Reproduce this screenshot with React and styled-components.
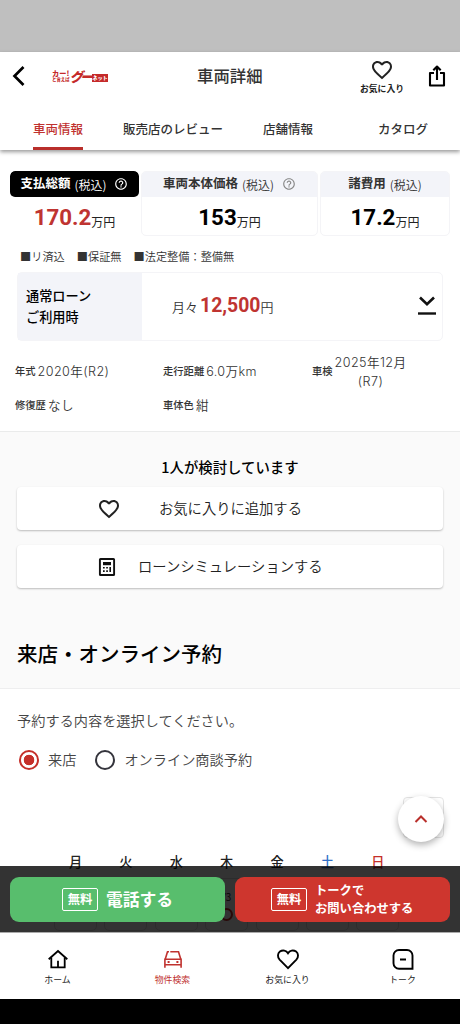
import React, { useState } from 'react'
import styled, { createGlobalStyle } from 'styled-components'
import { MdFavoriteBorder, MdHelpOutline } from 'react-icons/md'

const GlobalStyle = createGlobalStyle`
  * {
    box-sizing: border-box;
  }
  body {
    margin: 0;
    background: #fff;
    color: #333;
    font-family: "Noto Sans CJK JP", sans-serif;
  }
  button {
    font-family: inherit;
    color: inherit;
    background: none;
    border: none;
    padding: 0;
  }
`

const Screen = styled.div`
  position: relative;
  width: 460px;
  height: 1024px;
  overflow: hidden;
`

const StatusBar = styled.div`
  height: 52px;
  background: #bfbfbf;
`

const Header = styled.header`
  height: 98px;
  display: flex;
  flex-direction: column;
  justify-content: space-between;
  background: #fff;
  box-shadow: 0 2px 4px rgba(0, 0, 0, 0.4);
`

const TopBar = styled.div`
  height: 48px;
  display: grid;
  grid-template-columns: 52px 145px 163px 44px 21px 24px;
  align-items: center;
`

const BackIcon = styled.svg`
  margin-left: 12px;
`

const Logo = styled.div`
  display: flex;
  align-items: center;
  color: #c52a2a;
  font-weight: 900;
  white-space: nowrap;
`

const LogoLead = styled.div`
  width: 18px;
  font-size: 7.2px;
  line-height: 7px;
  small {
    display: block;
    font-size: 4.4px;
    line-height: 5px;
  }
`

const LogoMain = styled.span`
  width: 22px;
  padding-left: 1px;
  font-size: 13.5px;
  line-height: 16px;
  letter-spacing: -3px;
  transform: skewX(-12deg);
`

const LogoTag = styled.span`
  width: 16px;
  height: 8px;
  margin-top: 3px;
  background: #c52a2a;
  color: #fff;
  font-size: 5.2px;
  line-height: 8px;
  text-align: center;
`

const Title = styled.h1`
  margin: 0 0 2px;
  font-size: 16.4px;
  line-height: 24px;
  font-weight: 500;
  white-space: nowrap;
`

const HeaderFavorite = styled.button`
  display: flex;
  flex-direction: column;
  align-items: center;
  font-size: 8.8px;
  line-height: 13px;
  font-weight: 700;
  color: #222;
  white-space: nowrap;
`

const ShareButton = styled.button`
  display: flex;
  grid-column: 6;
  color: #000;
`

const Tabs = styled.nav`
  display: flex;
  padding-left: 33px;
`

const Tab = styled.button`
  height: 41px;
  margin-right: 40px;
  font-size: 12.5px;
  line-height: 37px;
  font-weight: 500;
  color: ${({ $active }) => ($active ? '#c0322f' : '#333')};
  border-bottom: 3px solid ${({ $active }) => ($active ? '#b92f2b' : 'transparent')};
  &:last-child {
    margin: 0 0 0 25px;
  }
`

const Summary = styled.section`
  height: 282px;
  padding-top: 21px;
  border-bottom: 1px solid #eaebeb;
`

const PriceRow = styled.div`
  display: grid;
  grid-template-columns: 129px 177px 130px;
  column-gap: 2px;
  padding: 0 10px;
`

const PriceCard = styled.div`
  height: 65px;
  border: 1px solid #f4f4f7;
  border-width: ${({ $main }) => ($main ? 0 : '1px')};
  border-radius: 5px;
  overflow: hidden;
`

const PriceLabel = styled.div`
  height: ${({ $main }) => ($main ? '26px' : '25px')};
  display: flex;
  align-items: center;
  justify-content: center;
  border-radius: ${({ $main }) => ($main ? '5px' : 0)};
  background: ${({ $main }) => ($main ? '#000' : '#f3f4f9')};
  color: ${({ $main }) => ($main ? '#fff' : '#333')};
  font-size: 12.5px;
  line-height: 24px;
  font-weight: 700;
  padding-bottom: ${({ $main }) => ($main ? '3px' : '4px')};
  svg {
    margin: 3px 0 0 8px;
    color: ${({ $main }) => ($main ? '#fff' : '#888')};
  }
`

const Tax = styled.span`
  margin: 4px 0 0 4px;
  font-size: 12px;
  line-height: 22px;
  font-weight: 350;
`

const Price = styled.div`
  display: flex;
  align-items: baseline;
  justify-content: center;
  height: 38px;
  color: ${({ $main }) => ($main ? '#bf3431' : '#000')};
  font-family: Roboto, sans-serif;
  font-size: 22.3px;
  line-height: 40px;
  font-weight: 700;
`

const Yen = styled.span`
  position: relative;
  top: 2px;
  color: #222;
  font-family: "Noto Sans CJK JP", sans-serif;
  font-size: 12px;
  line-height: 20px;
  font-weight: 400;
`

const Notes = styled.div`
  display: flex;
  gap: 12px;
  height: 36px;
  padding: 3px 0 0 20px;
  font-size: 11.2px;
  line-height: 34px;
  font-weight: 350;
`

const Loan = styled.div`
  display: grid;
  grid-template-columns: 124px 1fr 25px;
  align-items: center;
  height: 69px;
  margin: 0 17px;
  border: 1px solid #f4f4f7;
  border-radius: 5px;
`

const LoanLabel = styled.div`
  height: 67px;
  padding: 13px 0 0 8px;
  background: #f3f4f9;
  color: #000;
  font-size: 13.2px;
  line-height: 20.5px;
  font-weight: 500;
`

const LoanPrice = styled.div`
  padding-left: 30px;
  font-size: 13px;
  line-height: 24px;
  font-weight: 350;
  strong {
    margin-left: 2px;
    color: #bf3431;
    font: 700 19.4px Roboto, sans-serif;
  }
`

const Specs = styled.dl`
  display: grid;
  grid-template-columns: 148px 149px 1fr;
  grid-template-rows: 38px 30px;
  margin: 11px 15px 0;
`

const Spec = styled.div`
  display: flex;
  align-items: center;
  gap: 2px;
  dt {
    font-size: 10.3px;
    font-weight: 500;
    line-height: 18px;
  }
  dd {
    margin: 0;
    padding-top: 1px;
    font-family: Inter, "Noto Sans CJK JP", sans-serif;
    font-size: 12.6px;
    letter-spacing: 0.4px;
    line-height: 19px;
    font-weight: 350;
    text-align: center;
    white-space: nowrap;
  }
`

const Consider = styled.section`
  height: 257px;
  padding: 24px 17px 0;
  background: #fafafa;
  border-bottom: 1px solid #eeeeef;
`

const ConsiderCount = styled.p`
  margin: 0 0 9px;
  color: #000;
  font-size: 14.4px;
  line-height: 22px;
  font-weight: 500;
  text-align: center;
`

const WideButton = styled.button`
  display: flex;
  align-items: center;
  width: 100%;
  height: 43px;
  margin-bottom: 15px;
  padding-left: 80px;
  background: #fff;
  border-radius: 4px;
  box-shadow: 0 1px 2px rgba(0, 0, 0, 0.25);
  font-size: 14.3px;
  font-weight: 350;
  color: #222;
  span {
    margin: 0 0 2px ${({ $gap }) => $gap}px;
  }
`

const SectionTitle = styled.h2`
  margin: 49px 0 0;
  color: #000;
  font-size: 20.5px;
  line-height: 32px;
  font-weight: 500;
`

const Reserve = styled.section`
  padding: 20px 17px 0;
  font-size: 14.2px;
  line-height: 22px;
  font-weight: 350;
  color: #444;
  p {
    margin: 0;
  }
`

const Radios = styled.div`
  display: flex;
  gap: 19px;
  margin: 18px 0 0 2px;
`

const RadioLabel = styled.label`
  display: flex;
  align-items: center;
  gap: 9px;
  height: 22px;
  span {
    padding-bottom: 2px;
  }
`

const Radio = styled.input`
  appearance: none;
  width: 20px;
  height: 20px;
  margin: 0;
  border: 2px solid #34343c;
  border-radius: 50%;
  &:checked {
    border-color: #c52f29;
    background: radial-gradient(circle, #c52f29 5px, transparent 5.6px);
  }
`

const Calendar = styled.div`
  display: grid;
  grid-template-columns: repeat(7, 43px);
  column-gap: 7.4px;
  margin: 81px 0 0 37px;
`

const Weekday = styled.div`
  height: 26px;
  color: ${({ $color }) => $color || '#222'};
  font-size: 13.2px;
  line-height: 20px;
  font-weight: 500;
  text-align: center;
`

const Day = styled.div`
  display: flex;
  flex-direction: column;
  align-items: center;
  justify-content: flex-end;
  height: 53px;
  padding-bottom: 9px;
  border: 1px solid #ddd;
  border-radius: 5px;
  color: #222;
  font-size: 10px;
  line-height: 16px;
`

const Vacancy = styled.span`
  width: 13px;
  height: 13px;
  margin-top: 3px;
  border: 2px solid #c52f29;
  border-radius: 50%;
`

const ToTopFrame = styled.div`
  position: absolute;
  left: 403px;
  top: 797px;
  width: 41px;
  height: 41px;
  border: 1px solid #e4e4e4;
  border-radius: 4px;
`

const ToTop = styled.button`
  position: absolute;
  left: -6px;
  top: -2px;
  width: 46px;
  height: 46px;
  display: grid;
  place-items: center;
  background: #fff;
  border-radius: 50%;
  box-shadow: 0 3px 7px rgba(0, 0, 0, 0.3);
`

const Dock = styled.footer`
  position: absolute;
  left: 0;
  right: 0;
  bottom: 0;
`

const Actions = styled.div`
  display: grid;
  grid-template-columns: 215px 215px;
  gap: 10px;
  height: 66px;
  padding: 11px 10px;
  background: rgba(0, 0, 0, 0.8);
`

const Action = styled.button`
  display: flex;
  align-items: center;
  height: 45px;
  padding-left: ${({ $left }) => $left}px;
  gap: ${({ $gap }) => $gap}px;
  background: ${({ $bg }) => $bg};
  border-radius: 9px;
  color: #fff;
  font-size: ${({ $size }) => $size}px;
  line-height: 18px;
  font-weight: 700;
  text-align: left;
`

const ActionText = styled.span`
  padding-bottom: 2px;
`

const Free = styled.span`
  width: 36px;
  height: 23px;
  border: 1px solid #fff;
  border-radius: 2px;
  font-size: 12.3px;
  line-height: 21px;
  text-align: center;
`

const BottomNav = styled.nav`
  display: grid;
  grid-template-columns: repeat(4, 115px);
  height: 67px;
  background: #fff;
  border-top: 1px solid #aaa;
`

const NavItem = styled.button`
  display: flex;
  flex-direction: column;
  align-items: center;
  padding-top: 14px;
  font-size: 8.9px;
  line-height: 14px;
  color: ${({ $active }) => ($active ? '#c0322f' : '#222')};
  svg {
    margin-bottom: 2px;
    color: ${({ $active }) => ($active ? '#c0322f' : '#000')};
  }
`

const GestureBar = styled.div`
  height: 25px;
  background: #000;
`

const ShareIcon = () => (
  <svg width="24" height="24" viewBox="0 0 24 24" fill="none" stroke="currentColor" strokeWidth="2.1">
    <path d="M9 9H5v12.5h14V9h-4M12 16V2.8M8.3 6.3L12 2.6l3.7 3.7" strokeLinejoin="round" />
  </svg>
)

const CalculatorIcon = () => (
  <svg width="20" height="18" viewBox="-1 0 20 18">
    <rect x="1.9" y="1" width="14.2" height="16" rx="0.6" fill="none" stroke="#111" strokeWidth="1.9" />
    <path d="M5 4h8v3.2H5z" fill="#111" />
    <path d="M5 9h1.7v1.6H5zM8.2 9h1.7v1.6H8.2zM11.4 9H13v5h-1.6zM5 12.3h1.7V14H5zM8.2 12.3h1.7V14H8.2z" fill="#111" />
  </svg>
)

const ExpandIcon = () => (
  <svg width="20" height="22" viewBox="0 0 20 22">
    <path d="M3 1.5l7 6.7L17 1.5" fill="none" stroke="#111" strokeWidth="2.6" />
    <path d="M1 17.5h18" stroke="#111" strokeWidth="2.4" />
  </svg>
)

const HomeIcon = () => (
  <svg width="24" height="24" viewBox="0 0 24 24" fill="none" stroke="currentColor" strokeWidth="1.8">
    <path d="M2.7 12.2L12 4l9.3 8.2" />
    <path d="M5.3 10.5v9.8h13.4v-9.8M12 20.3v-6.6" />
  </svg>
)

const CarIcon = () => (
  <svg width="24" height="24" viewBox="0 0 24 24" fill="none" stroke="currentColor" strokeWidth="1.6">
    <path d="M8 4.8H6.5L4.2 12.3M9.3 4.8H17.5L19.8 12.3M3.9 20.8V12.3H20.1V20.8M3.9 17.8H20.1" />
    <path d="M6.6 14.9h2M15.4 14.9h2" strokeWidth="2" />
  </svg>
)

const HeartIcon = () => (
  <svg width="24" height="24" viewBox="0 0 24 24" fill="none" stroke="currentColor" strokeWidth="1.9">
    <path d="M12 21.2L3.6 12.6C1.2 10 1.6 6.3 3.9 4.6 6.7 2.6 10.3 3.4 12 6.2 13.7 3.4 17.3 2.6 20.1 4.6 22.4 6.3 22.8 10 20.4 12.6Z" />
  </svg>
)

const TalkIcon = () => (
  <svg width="24" height="24" viewBox="0 0 24 24" fill="none" stroke="currentColor" strokeWidth="1.9">
    <path d="M21.5 21.8H8a5.5 5.5 0 0 1-5.5-5.5V8.5A5.5 5.5 0 0 1 8 3h8a5.5 5.5 0 0 1 5.5 5.5z" />
    <path d="M9 12.5h6" strokeWidth="2" />
  </svg>
)

const tabs = ['車両情報', '販売店のレビュー', '店舗情報', 'カタログ']

const prices = [
  { label: '支払総額', value: '170.2', help: true, main: true },
  { label: '車両本体価格', value: '153', help: true },
  { label: '諸費用', value: '17.2' },
]

const specs = [
  ['年式', '2020年(R2)'],
  ['走行距離', '6.0万km'],
  ['車検', <>2025年12月<br />(R7)</>],
  ['修復歴', 'なし'],
  ['車体色', '紺'],
]

const weekdays = [
  { name: '月' },
  { name: '火' },
  { name: '水' },
  { name: '木', date: '/3' },
  { name: '金' },
  { name: '土', color: '#3270c8' },
  { name: '日', color: '#c52f29' },
]

const navItems = [
  ['ホーム', HomeIcon],
  ['物件検索', CarIcon],
  ['お気に入り', HeartIcon],
  ['トーク', TalkIcon],
]

function App() {
  const [tab, setTab] = useState('車両情報')
  const [nav, setNav] = useState('物件検索')
  const [visit, setVisit] = useState('来店')

  return (
    <>
      <GlobalStyle />
      <Screen>
        <StatusBar />
        <Header>
          <TopBar>
            <BackIcon width="14" height="20" viewBox="0 0 14 20">
              <path d="M11.5 1L2.5 10l9 9" fill="none" stroke="#000" strokeWidth="2.7" />
            </BackIcon>
            <Logo>
              <LogoLead>カー!<small>と言えば</small></LogoLead>
              <LogoMain>グー</LogoMain>
              <LogoTag>ネット</LogoTag>
            </Logo>
            <Title>車両詳細</Title>
            <HeaderFavorite>
              <MdFavoriteBorder size={24} />
              お気に入り
            </HeaderFavorite>
            <ShareButton><ShareIcon /></ShareButton>
          </TopBar>
          <Tabs>
            {tabs.map((name) => (
              <Tab key={name} $active={name === tab} onClick={() => setTab(name)}>{name}</Tab>
            ))}
          </Tabs>
        </Header>

        <Summary>
          <PriceRow>
            {prices.map(({ label, value, help, main }) => (
              <PriceCard key={label} $main={main}>
                <PriceLabel $main={main}>
                  {label}
                  <Tax>(税込)</Tax>
                  {help && <MdHelpOutline size={14} />}
                </PriceLabel>
                <Price $main={main}>{value}<Yen>万円</Yen></Price>
              </PriceCard>
            ))}
          </PriceRow>
          <Notes>
            <span>■リ済込</span>
            <span>■保証無</span>
            <span>■法定整備：整備無</span>
          </Notes>
          <Loan>
            <LoanLabel>通常ローン<br />ご利用時</LoanLabel>
            <LoanPrice>月々<strong>12,500</strong>円</LoanPrice>
            <ExpandIcon />
          </Loan>
          <Specs>
            {specs.map(([name, value]) => (
              <Spec key={name}>
                <dt>{name}</dt>
                <dd>{value}</dd>
              </Spec>
            ))}
          </Specs>
        </Summary>

        <Consider>
          <ConsiderCount>1人が検討しています</ConsiderCount>
          <WideButton $gap={38}>
            <MdFavoriteBorder size={24} />
            <span>お気に入りに追加する</span>
          </WideButton>
          <WideButton $gap={21}>
            <CalculatorIcon />
            <span>ローンシミュレーションする</span>
          </WideButton>
          <SectionTitle>来店・オンライン予約</SectionTitle>
        </Consider>

        <Reserve>
          <p>予約する内容を選択してください。</p>
          <Radios>
            {['来店', 'オンライン商談予約'].map((name) => (
              <RadioLabel key={name}>
                <Radio type="radio" name="visit" checked={visit === name} onChange={() => setVisit(name)} />
                <span>{name}</span>
              </RadioLabel>
            ))}
          </Radios>
          <Calendar>
            {weekdays.map(({ name, color }) => (
              <Weekday key={name} $color={color}>{name}</Weekday>
            ))}
            {weekdays.map(({ name, date }) => (
              <Day key={name}>{date}<Vacancy /></Day>
            ))}
          </Calendar>
        </Reserve>

        <ToTopFrame>
          <ToTop>
            <svg width="14" height="10" viewBox="0 0 14 10">
              <path d="M1.5 8L7 2.5 12.5 8" fill="none" stroke="#b92f2b" strokeWidth="2" />
            </svg>
          </ToTop>
        </ToTopFrame>

        <Dock>
          <Actions>
            <Action $bg="#58be6d" $left={52} $gap={8} $size={16.8}>
              <Free>無料</Free>
              <ActionText>電話する</ActionText>
            </Action>
            <Action $bg="#ce362e" $left={36} $gap={8} $size={12.3}>
              <Free>無料</Free>
              <ActionText>トークで<br />お問い合わせする</ActionText>
            </Action>
          </Actions>
          <BottomNav>
            {navItems.map(([name, Icon]) => (
              <NavItem key={name} $active={name === nav} onClick={() => setNav(name)}>
                <Icon />
                {name}
              </NavItem>
            ))}
          </BottomNav>
          <GestureBar />
        </Dock>
      </Screen>
    </>
  )
}

export default App
